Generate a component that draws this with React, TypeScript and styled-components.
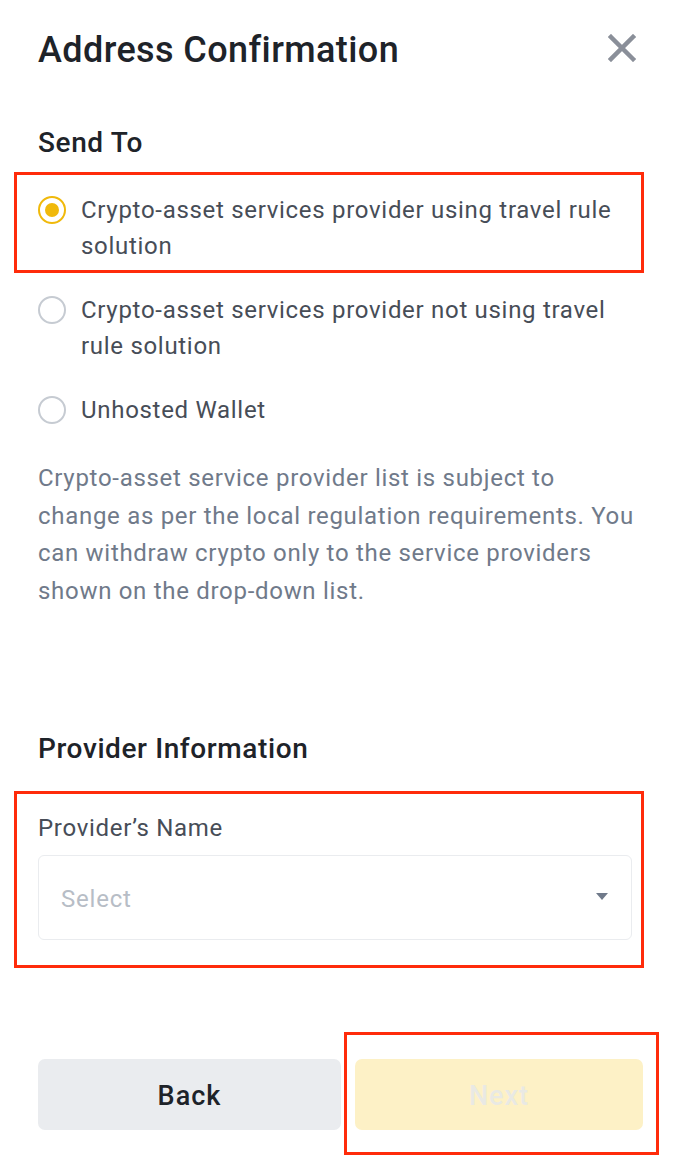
import React, { useState } from 'react'
import styled, { createGlobalStyle, css } from 'styled-components'

const GlobalStyle = createGlobalStyle`
  html, body {
    margin: 0;
    padding: 0;
    background: #fff;
  }
  body {
    font-family: 'Roboto', 'Liberation Sans', sans-serif;
    -webkit-font-smoothing: antialiased;
  }
`

// red annotation frame drawn over a block, insets are how far it sticks out
const marked = css`
  position: relative;
  &::after {
    content: '';
    position: absolute;
    top: ${({ $mark }) => -$mark[0]}px;
    right: ${({ $mark }) => -$mark[1]}px;
    bottom: ${({ $mark }) => -$mark[2]}px;
    left: ${({ $mark }) => -$mark[3]}px;
    border: 3px solid #ff2b0a;
    pointer-events: none;
  }
`

const Page = styled.div`
  width: 680px;
  min-height: 1168px;
  box-sizing: border-box;
  padding: 0 38px;
  background: #fff;
`

const Header = styled.div`
  display: flex;
  align-items: center;
  justify-content: space-between;
  padding-top: 28px;
  height: 44px;
`

const Title = styled.h1`
  margin: 0;
  font-size: 36px;
  line-height: 44px;
  font-weight: 500;
  color: #1e2329;
  letter-spacing: 0.4px;
`

const CloseButton = styled.button`
  display: flex;
  align-items: center;
  justify-content: center;
  width: 32px;
  height: 32px;
  margin-right: 4px;
  margin-top: -4px;
  padding: 0;
  border: none;
  background: none;
  cursor: pointer;
`

const SectionTitle = styled.h2`
  margin: ${({ $top }) => $top}px 0 0;
  font-size: 28px;
  line-height: 34px;
  font-weight: 500;
  color: #1e2329;
  letter-spacing: 0.6px;
`

const Options = styled.div`
  display: flex;
  flex-direction: column;
  gap: 28px;
  margin-top: 32px;
`

const Option = styled.label`
  display: flex;
  align-items: flex-start;
  gap: 15px;
  cursor: pointer;
  ${({ $mark }) => $mark && marked}
`

const Radio = styled.span`
  flex: none;
  box-sizing: border-box;
  width: 28px;
  height: 28px;
  margin-top: 4px;
  border-radius: 50%;
  border: 2px solid ${({ $checked }) => ($checked ? '#f0b90b' : '#c6cbd2')};
  display: flex;
  align-items: center;
  justify-content: center;

  &::before {
    content: '';
    width: 14px;
    height: 14px;
    border-radius: 50%;
    background: #f0b90b;
    display: ${({ $checked }) => ($checked ? 'block' : 'none')};
  }
`

const OptionText = styled.span`
  font-size: 24px;
  line-height: 36px;
  color: #474d57;
  letter-spacing: 0.7px;
`

const Note = styled.p`
  margin: 32px 0 0;
  font-size: 24px;
  line-height: 37.7px;
  color: #707a8a;
  letter-spacing: 0.7px;
`

const Field = styled.div`
  margin-top: 47px;
  ${({ $mark }) => $mark && marked}
`

const FieldLabel = styled.div`
  font-size: 24px;
  line-height: 30px;
  color: #474d57;
  letter-spacing: 0.7px;
`

const SelectBox = styled.div`
  display: flex;
  align-items: center;
  justify-content: space-between;
  box-sizing: border-box;
  height: 85px;
  margin: 12px 10px 0 0;
  padding: 4px 22px 0;
  border: 1px solid #eaecef;
  border-radius: 6px;
`

const Placeholder = styled.span`
  font-size: 24px;
  color: #b7bdc6;
  letter-spacing: 0.8px;
`

const Caret = styled.svg`
  margin-right: 1px;
  margin-top: -4px;
`

const Actions = styled.div`
  display: grid;
  grid-template-columns: 303px 1fr;
  gap: 14px;
  margin-top: 119px;
  margin-right: -1px;
`

const ActionButton = styled.button`
  height: 71px;
  padding-top: 4px;
  border: none;
  border-radius: 7px;
  font-family: inherit;
  font-size: 27px;
  font-weight: 500;
  letter-spacing: 1px;
  cursor: pointer;
  background: ${({ $primary }) => ($primary ? '#fdf1c6' : '#eaecef')};
  color: ${({ $primary }) => ($primary ? '#e9e9e4' : '#1e2329')};
  ${({ $mark }) => $mark && marked}
`

const options = [
  'Crypto-asset services provider using travel rule solution',
  'Crypto-asset services provider not using travel rule solution',
  'Unhosted Wallet',
]

const App = () => {
  const [selected, setSelected] = useState(0)

  return (
    <Page>
      <GlobalStyle />
      <Header>
        <Title>Address Confirmation</Title>
        <CloseButton aria-label="close">
          <svg width="28" height="28" viewBox="0 0 28 28">
            <path d="M3 3 L25 25 M25 3 L3 25" stroke="#8a8f99" strokeWidth="4.5" strokeLinecap="square" />
          </svg>
        </CloseButton>
      </Header>

      <SectionTitle $top={54}>Send To</SectionTitle>
      <Options>
        {options.map((text, index) => (
          <Option
            key={index}
            onClick={() => setSelected(index)}
            $mark={index === 0 ? [20, 2, 9, 24] : null}
          >
            <Radio $checked={selected === index} />
            <OptionText>{text}</OptionText>
          </Option>
        ))}
      </Options>

      <Note>
        Crypto-asset service provider list is subject to change as per the local regulation
        requirements. You can withdraw crypto only to the service providers shown on the
        drop-down list.
      </Note>

      <SectionTitle $top={121}>Provider Information</SectionTitle>
      <Field $mark={[22, 2, 28, 24]}>
        <FieldLabel>Provider’s Name</FieldLabel>
        <SelectBox>
          <Placeholder>Select</Placeholder>
          <Caret width="12" height="8" viewBox="0 0 12 8">
            <path d="M0 0 H12 L6 7 Z" fill="#707a8a" />
          </Caret>
        </SelectBox>
      </Field>

      <Actions>
        <ActionButton type="button">Back</ActionButton>
        <ActionButton type="button" $primary $mark={[27, 16, 25, 11]}>
          Next
        </ActionButton>
      </Actions>
    </Page>
  )
}

export default App
